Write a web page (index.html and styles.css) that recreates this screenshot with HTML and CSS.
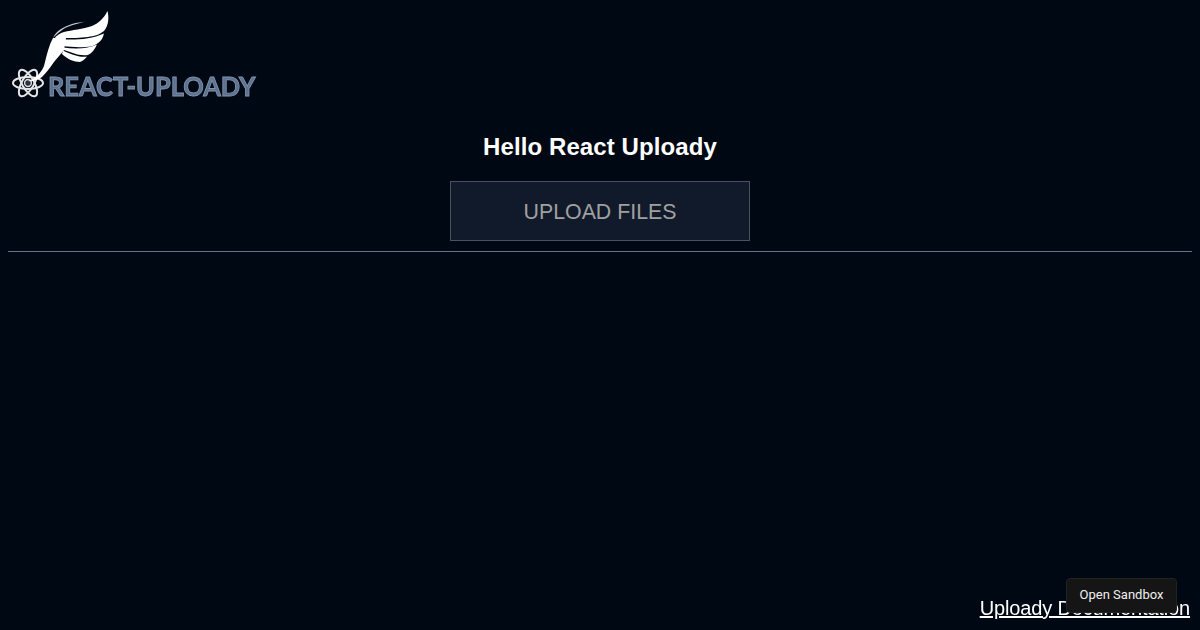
FILE: index.html
```html
<!DOCTYPE html>
<html lang="en">
<head>
    <meta charset="UTF-8">
    <title>Hello React Uploady</title>
    <link rel="stylesheet" href="styles.css">
</head>
<body>
    <header class="logoRow">
        <svg class="logo" xmlns="http://www.w3.org/2000/svg" width="260" height="96" viewBox="0 0 260 96">
            <defs>
                <filter id="soften"><feGaussianBlur stdDeviation="0.4" /></filter>
            </defs>
            <!-- atom -->
            <g class="atom" transform="translate(20,75)" filter="url(#soften)">
                <ellipse rx="15" ry="6" />
                <ellipse rx="15" ry="6" transform="rotate(60)" />
                <ellipse rx="15" ry="6" transform="rotate(-60)" />
                <circle class="atomCore" r="3.4" />
            </g>
            <!-- wing, page coords minus body margin -->
            <g class="wing" transform="translate(-8,-8)" filter="url(#soften)">
                <path class="wingFade" d="M53 38C56 31 63 27 72 24C77 22.500 82 22 86 21.500C80 23 71 25 65 28C60 31 56 35 53 38Z" />
                <path d="M54 39C57 35 60 33 64 32C72 30 83 29 92 26C99 23 104 18 107.500 11C109 17 109 25 104 31C99 35 94 36 88 37C80 38 72 38 65 38L62 47L54 52Z" />
                <path d="M65 39.500C78 40 92 39 104 33.500C103 38 101 41 98 43C94 46 90 47 85 47C78 47.500 70 47 63 46Z" />
                <path d="M63 47.500C75 49 88 49 97 44.500C95 49 92 53 88 55C83 56 76 54.500 70 52C68 51.500 66 50.500 64 50Z" />
                <path d="M63 50.500C70 54 80 58 87 56.500C85 59 83 61 80 62C74 62 67 59 62 54Z" />
                <path d="M53 38C49 45 47 54 45 62C44 68 41 72 37 76C34 78 31 80 28 81C32 82 38 80 42 77C46 73 50 68 54 62C57 58 60 55 64 50L66 38Z" />
            </g>
            <text class="logoText" transform="translate(40,88) scale(0.925,1)" filter="url(#soften)">REACT-UPLOADY</text>
        </svg>
    </header>

    <main class="content">
        <h2 class="title">Hello React Uploady</h2>
        <button class="uploadButton">UPLOAD FILES</button>
    </main>
    <hr class="divider">

    <a class="docsLink" href="#">Uploady Documentation</a>
    <div class="sandboxTip">Open Sandbox</div>
</body>
</html>
```

FILE: styles.css
```css
body {
    margin: 8px;
    background-color: #000814;
    color: #fff;
    font-family: "Liberation Sans", Arial, sans-serif;
}

.logoRow {
    height: 96px;
}

.logo {
    display: block;
    overflow: visible;
}

.wing {
    fill: #fff;
}

.wingFade {
    fill: #c9ced6;
}

.atom ellipse {
    fill: none;
    stroke: #e6e6e6;
    stroke-width: 2;
}

.atomCore {
    fill: #27303f;
    stroke: #d8d8d8;
    stroke-width: 1.5;
}

.logoText {
    font-family: Lato, sans-serif;
    font-weight: 700;
    font-size: 27.500px;
    fill: #5d7291;
    stroke: #8294ac;
    stroke-width: 0.9;
}

.content {
    display: flex;
    flex-direction: column;
    align-items: center;
}

.title {
    margin: 29px 0 20px;
    font-size: 24px;
    line-height: 28px;
    font-weight: 700;
    letter-spacing: 0.1px;
}

.uploadButton {
    width: 300px;
    height: 60px;
    padding: 2px 0 0;
    background-color: #111a2b;
    border: 1px solid #4a5261;
    color: #a0a0a0;
    font-family: inherit;
    font-size: 21.330px;
}

.divider {
    margin: 10px 0 0;
    border: 0;
    border-top: 1px solid #6b7280;
}

.docsLink {
    position: fixed;
    right: 10px;
    bottom: 10px;
    color: #fff;
    font-size: 20px;
    letter-spacing: -0.15px;
}

.sandboxTip {
    position: fixed;
    right: 23px;
    bottom: 17px;
    width: 111px;
    height: 35px;
    padding-bottom: 2px;
    box-sizing: border-box;
    display: flex;
    align-items: center;
    justify-content: center;
    background-color: #151515;
    border: 1px solid #222;
    border-radius: 4px;
    color: #f0f0f0;
    font-family: Roboto, sans-serif;
    font-size: 13px;
}
```
